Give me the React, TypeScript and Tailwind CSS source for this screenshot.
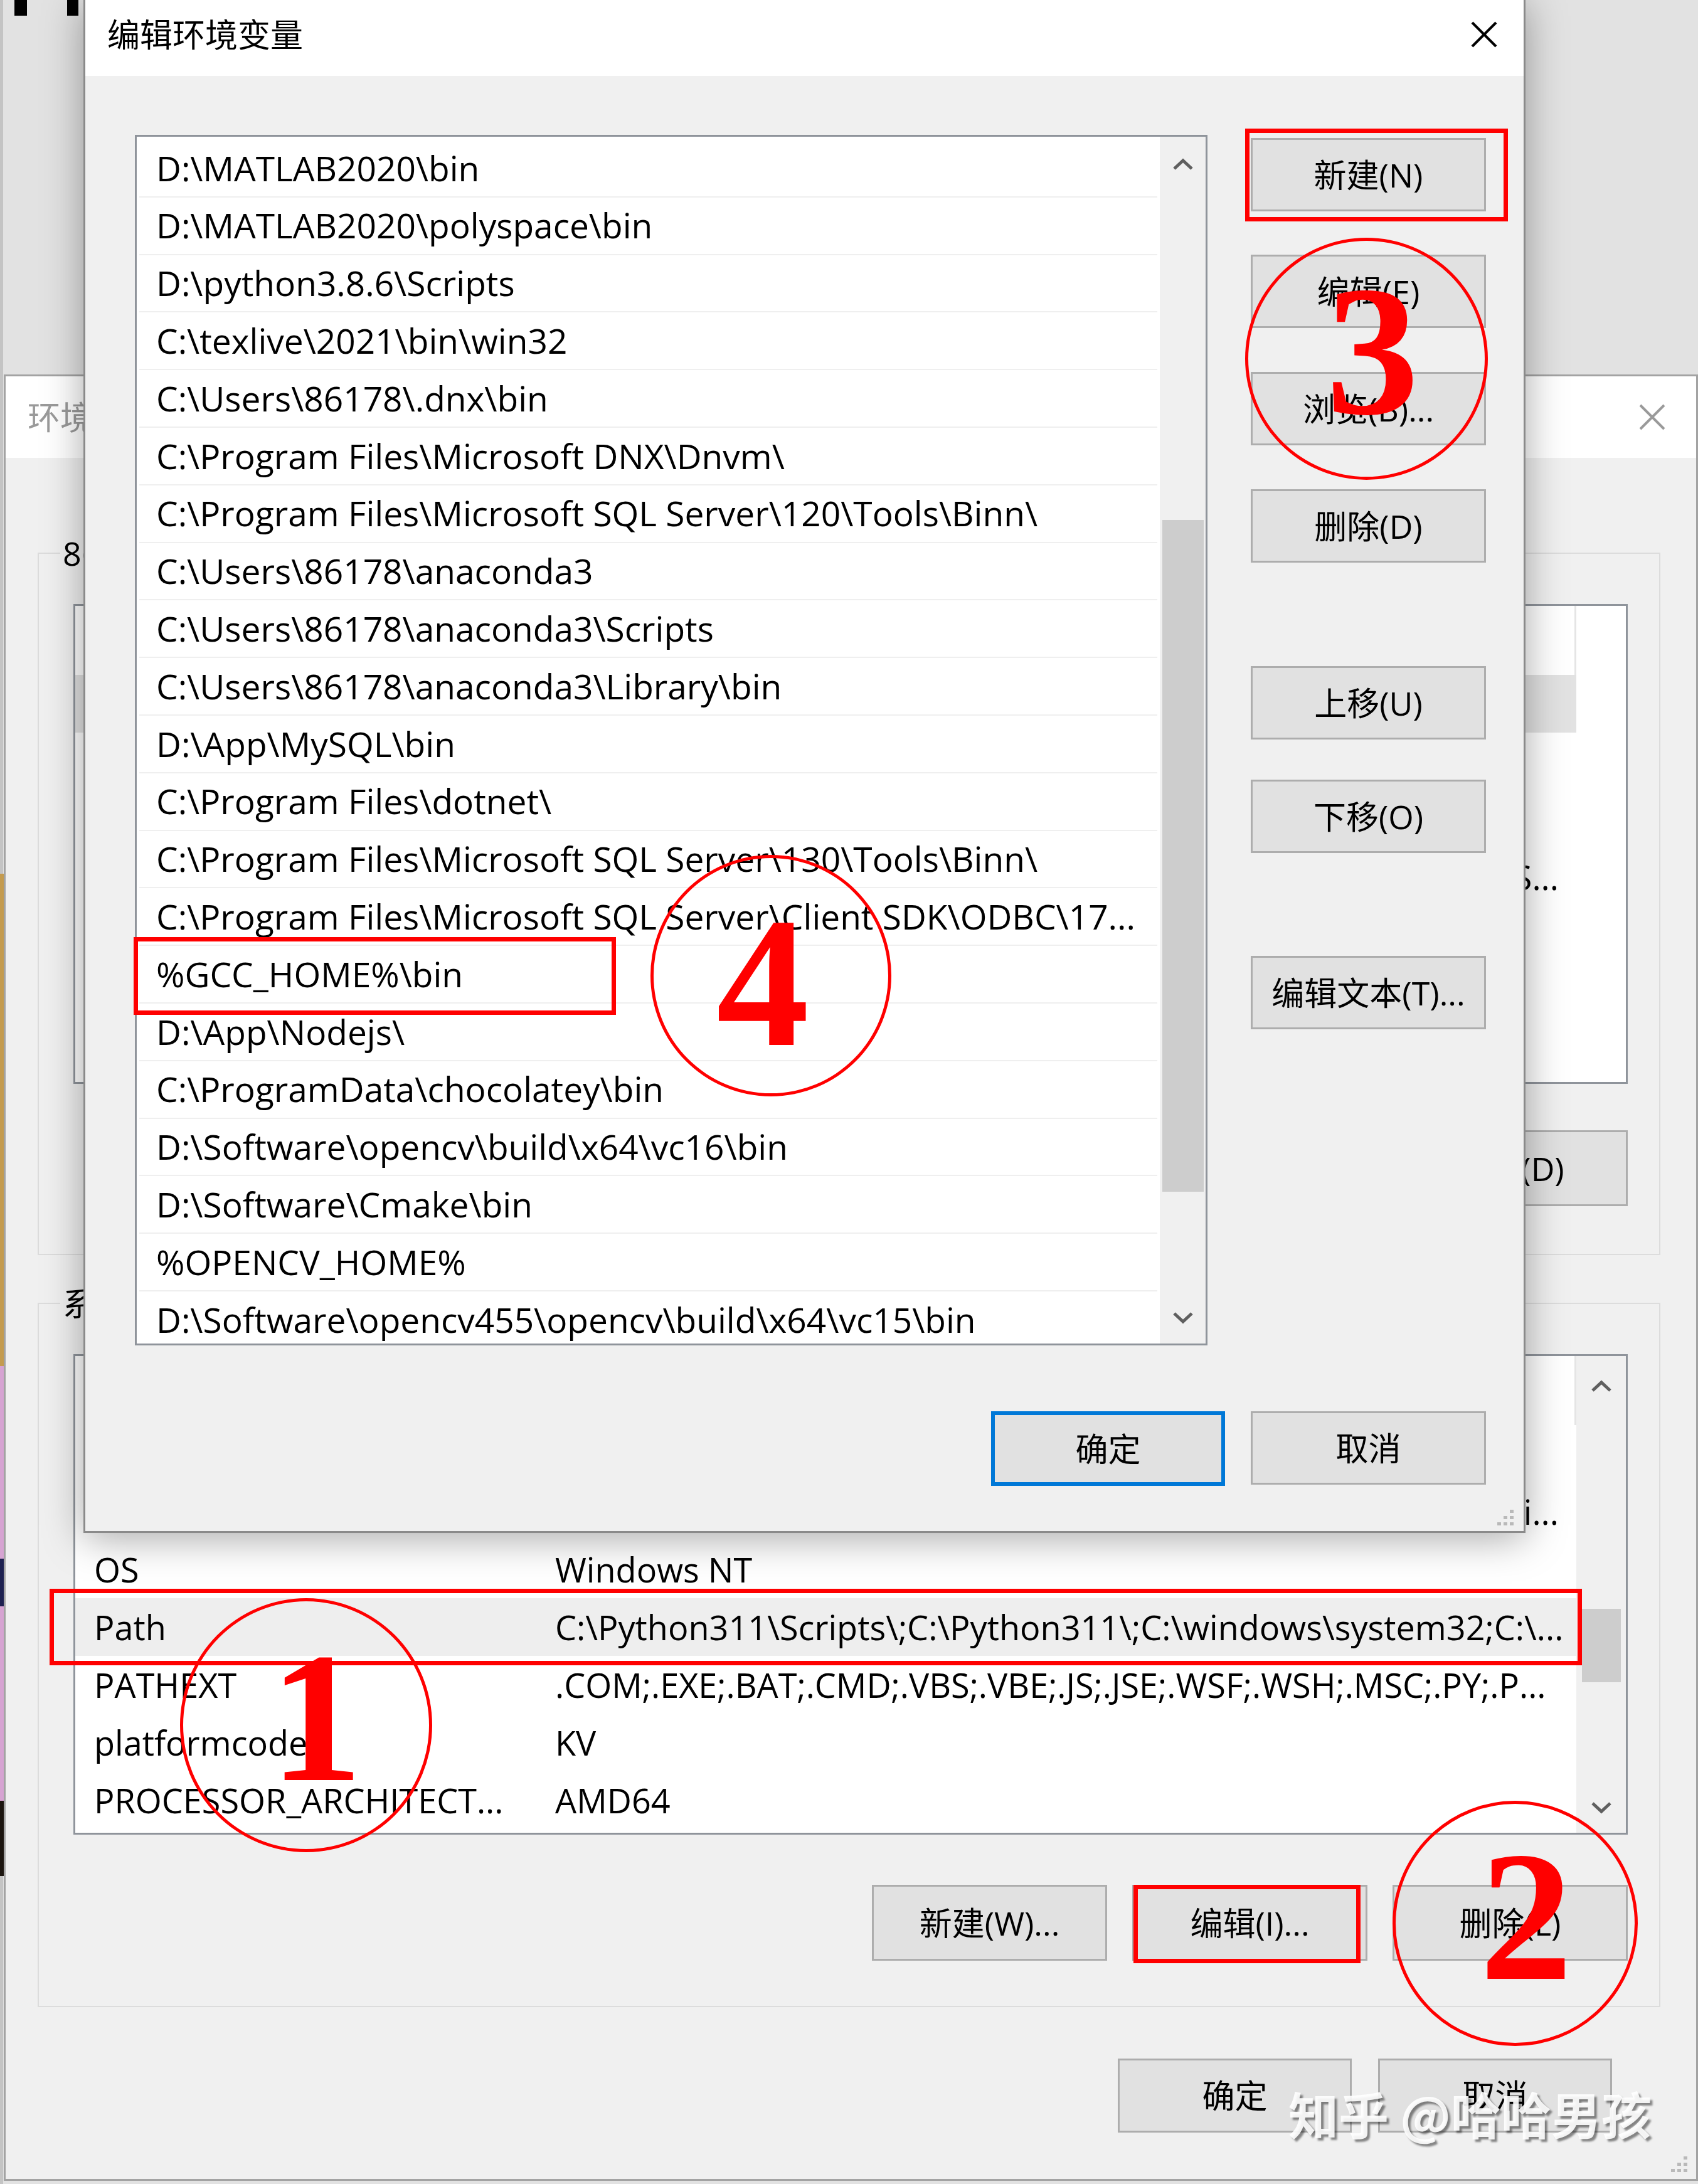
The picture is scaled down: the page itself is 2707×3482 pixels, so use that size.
import clsx from "clsx"
import { twMerge } from "tailwind-merge"

const dialogPaths = [
  "D:\\MATLAB2020\\bin",
  "D:\\MATLAB2020\\polyspace\\bin",
  "D:\\python3.8.6\\Scripts",
  "C:\\texlive\\2021\\bin\\win32",
  "C:\\Users\\86178\\.dnx\\bin",
  "C:\\Program Files\\Microsoft DNX\\Dnvm\\",
  "C:\\Program Files\\Microsoft SQL Server\\120\\Tools\\Binn\\",
  "C:\\Users\\86178\\anaconda3",
  "C:\\Users\\86178\\anaconda3\\Scripts",
  "C:\\Users\\86178\\anaconda3\\Library\\bin",
  "D:\\App\\MySQL\\bin",
  "C:\\Program Files\\dotnet\\",
  "C:\\Program Files\\Microsoft SQL Server\\130\\Tools\\Binn\\",
  "C:\\Program Files\\Microsoft SQL Server\\Client SDK\\ODBC\\17...",
  "%GCC_HOME%\\bin",
  "D:\\App\\Nodejs\\",
  "C:\\ProgramData\\chocolatey\\bin",
  "D:\\Software\\opencv\\build\\x64\\vc16\\bin",
  "D:\\Software\\Cmake\\bin",
  "%OPENCV_HOME%",
  "D:\\Software\\opencv455\\opencv\\build\\x64\\vc15\\bin",
]

type VarRow = { name: string; value: string; selected?: boolean; tail?: boolean }

const userVars: VarRow[] = [
  { name: "ChocolateyLastPathUpdate", value: "133257286417856342", selected: true },
  { name: "OneDrive", value: "C:\\Users\\86178\\OneDrive" },
  { name: "OneDriveConsumer", value: "C:\\Users\\86178\\OneDrive" },
  {
    name: "Path",
    value:
      "%USERPROFILE%\\AppData\\Local\\Microsoft\\WindowsApps;%PyCharm Community Edition%;D:\\App\\VS Code\\bin;%IntelliJ IDEA%;S...",
    tail: true,
  },
  { name: "PyCharm Community Edition", value: "C:\\Program Files\\JetBrains\\PyCharm\\bin;" },
  { name: "TEMP", value: "%USERPROFILE%\\AppData\\Local\\Temp" },
  { name: "TMP", value: "%USERPROFILE%\\AppData\\Local\\Temp" },
]

const systemVars: VarRow[] = [
  { name: "NUMBER_OF_PROCESSORS", value: "12" },
  {
    name: "NVTOOLSEXT_PATH",
    value: "C:\\Program Files\\NVIDIA Corporation\\NvToolsExt\\bin\\x64;C:\\Program Files (x86)\\Windows Kits\\10\\Wi...",
    tail: true,
  },
  { name: "OS", value: "Windows NT" },
  { name: "Path", value: "C:\\Python311\\Scripts\\;C:\\Python311\\;C:\\windows\\system32;C:\\...", selected: true },
  { name: "PATHEXT", value: ".COM;.EXE;.BAT;.CMD;.VBS;.VBE;.JS;.JSE;.WSF;.WSH;.MSC;.PY;.P..." },
  { name: "platformcode", value: "KV" },
  { name: "PROCESSOR_ARCHITECT...", value: "AMD64" },
]

function Chevron({ up }: { up?: boolean }) {
  return (
    <svg width="34" height="20" viewBox="0 0 34 20" fill="none">
      <polyline points={up ? "3,17 17,4 31,17" : "3,3 17,16 31,3"} stroke="#5f5f5f" strokeWidth="5" />
    </svg>
  )
}

function CloseX({ color = "#000" }: { color?: string }) {
  return (
    <svg width="44" height="44" viewBox="0 0 44 44" fill="none">
      <path d="M3 3L41 41M41 3L3 41" stroke={color} strokeWidth="4" />
    </svg>
  )
}

function Grip() {
  const dots = [
    [24, 24],
    [24, 14],
    [14, 24],
    [24, 4],
    [14, 14],
    [4, 24],
  ]
  return (
    <svg width="32" height="32" viewBox="0 0 32 32">
      {dots.map(([x, y]) => (
        <rect key={`${x}-${y}`} x={x} y={y} width="6" height="5" fill="#b9b9b9" />
      ))}
    </svg>
  )
}

function Btn({ label, className }: { label: string; className?: string }) {
  return (
    <div
      className={twMerge(
        "flex items-center justify-center bg-[#e1e1e1] border-[3px] border-[#adadad] text-[52px] leading-none text-black shrink-0",
        className
      )}
    >
      {label}
    </div>
  )
}

function VarList({ rows, scroll, selBg }: { rows: VarRow[]; scroll?: boolean; selBg: string }) {
  return (
    <div className="flex w-full h-full border-[3px] border-[#8f949b] bg-white overflow-hidden">
      <div className="w-[2393px] shrink-0 flex flex-col">
        <div className="flex items-center h-[110px] shrink-0 pl-[30px] border-r-[3px] border-[#e5e5e5] text-[52px]">
          <span className="w-[735px]">变量</span>
          <span>值</span>
        </div>
        {rows.map((r) => (
          <div
            key={r.name}
            className={clsx(
              "flex items-center h-[92px] shrink-0 pl-[30px] text-[54px] whitespace-nowrap",
              r.selected && selBg
            )}
          >
            <span className="w-[735px] shrink-0 overflow-hidden">{r.name}</span>
            {r.tail ? (
              <span className="flex justify-end w-[1600px] overflow-hidden">
                <span className="shrink-0">{r.value}</span>
              </span>
            ) : (
              <span>{r.value}</span>
            )}
          </div>
        ))}
      </div>
      {scroll && (
        <div className="flex-1 bg-[#f0f0f0] flex flex-col items-center">
          <div className="h-[96px] flex items-center">
            <Chevron up />
          </div>
          <div className="mt-[307px] w-[62px] h-[117px] bg-[#cdcdcd]" />
          <div className="flex-1" />
          <div className="h-[80px] flex items-center">
            <Chevron />
          </div>
        </div>
      )}
    </div>
  )
}

function GroupBox({
  label,
  rows,
  scroll,
  selBg,
  buttons,
  listH,
  btnGap,
  tail,
}: {
  label: string
  rows: VarRow[]
  scroll?: boolean
  selBg: string
  buttons: string[]
  listH: string
  btnGap: string
  tail: string
}) {
  return (
    <div className={clsx("relative border-2 border-[#dcdcdc] pt-[80px] pl-[55px] pr-[50px]", tail)}>
      <span className="absolute -top-[31px] left-[34px] px-[4px] bg-[#f0f0f0] text-[52px] leading-[60px]">{label}</span>
      <div className={listH}>
        <VarList rows={rows} scroll={scroll} selBg={selBg} />
      </div>
      <div className={clsx("flex justify-end", btnGap)}>
        {buttons.map((b) => (
          <Btn key={b} label={b} className="w-[375px] h-[121px]" />
        ))}
      </div>
    </div>
  )
}

function EnvWindow() {
  return (
    <div className="absolute left-[6px] top-[597px] w-[2701px] h-[2880px] border-[3px] border-[#a3a3a3] bg-[#f0f0f0] flex flex-col">
      <div className="h-[130px] shrink-0 bg-white flex items-center justify-between pl-[35px] pr-[48px]">
        <span className="text-[52px] text-[#9a9a9a]">环境变量</span>
        <CloseX color="#9a9a9a" />
      </div>
      <div className="flex flex-col pl-[51px] pr-[57px] pt-[151px]">
        <GroupBox
          label="86178 的用户变量(U)"
          rows={userVars}
          selBg="bg-[#e2e2e2]"
          buttons={["新建(N)...", "编辑(E)...", "删除(D)"]}
          listH="h-[765px]"
          btnGap="gap-[42px] mt-[74px]"
          tail="pb-[76px]"
        />
        <div className="mt-[76px]">
          <GroupBox
            label="系统变量(S)"
            rows={systemVars}
            scroll
            selBg="bg-[#eeeeee]"
            buttons={["新建(W)...", "编辑(I)...", "删除(L)"]}
            listH="h-[766px]"
            btnGap="gap-[40px] mt-[80px]"
            tail="pb-[72px]"
          />
        </div>
        <div className="flex justify-end gap-[42px] mt-[82px] pr-[77px]">
          <Btn label="确定" className="w-[373px] h-[118px]" />
          <Btn label="取消" className="w-[373px] h-[118px]" />
        </div>
      </div>
      <div className="absolute right-[12px] bottom-[8px]">
        <Grip />
      </div>
    </div>
  )
}

function EditDialog() {
  return (
    <div className="absolute left-[133px] top-[-3px] w-[2299px] h-[2447px] border-[3px] border-[#8a8a8a] bg-[#f0f0f0] shadow-[0_8px_60px_rgba(0,0,0,0.35)] flex flex-col">
      <div className="h-[121px] shrink-0 bg-white flex items-center justify-between pl-[35px] pr-[41px] pb-[12px]">
        <span className="text-[52px] text-black">编辑环境变量</span>
        <CloseX />
      </div>
      <div className="flex flex-col pl-[79px] pr-[60px] pt-[94px]">
        <div className="flex items-start gap-[69px]">
          <div className="w-[1710px] h-[1930px] shrink-0 border-[3px] border-[#8f949b] bg-white flex overflow-hidden">
            <div className="flex-1 flex flex-col pt-[5px] px-[4px]">
              {dialogPaths.map((p) => (
                <div
                  key={p}
                  className="h-[91.8px] shrink-0 flex items-center pl-[27px] border-b-2 border-[#efefef] text-[55px] text-black whitespace-nowrap"
                >
                  {p}
                </div>
              ))}
            </div>
            <div className="w-[73px] shrink-0 bg-[#f0f0f0] flex flex-col items-center">
              <div className="h-[88px] flex items-center">
                <Chevron up />
              </div>
              <div className="mt-[523px] w-[66px] h-[1071px] bg-[#cdcdcd]" />
              <div className="flex-1" />
              <div className="h-[82px] flex items-center">
                <Chevron />
              </div>
            </div>
          </div>
          <div className="flex flex-col mt-[5px]">
            <Btn label="新建(N)" className="w-[375px] h-[117px]" />
            <Btn label="编辑(E)" className="w-[375px] h-[117px] mt-[69px]" />
            <Btn label="浏览(B)..." className="w-[375px] h-[117px] mt-[70px]" />
            <Btn label="删除(D)" className="w-[375px] h-[117px] mt-[70px]" />
            <Btn label="上移(U)" className="w-[375px] h-[117px] mt-[165px]" />
            <Btn label="下移(O)" className="w-[375px] h-[117px] mt-[64px]" />
            <Btn label="编辑文本(T)..." className="w-[375px] h-[117px] mt-[164px]" />
          </div>
        </div>
        <div className="flex justify-end gap-[41px] mt-[105px]">
          <Btn label="确定" className="w-[373px] h-[119px] border-[6px] border-[#0078d7]" />
          <Btn label="取消" className="w-[375px] h-[117px]" />
        </div>
      </div>
      <div className="absolute right-[14px] bottom-[6px]">
        <Grip />
      </div>
    </div>
  )
}

function Annotations() {
  const digit =
    "absolute w-[160px] text-center text-[296px] leading-none font-bold text-[#ff0000] font-['Liberation_Serif',serif]"
  return (
    <>
      <div className="absolute left-[1985px] top-[205px] w-[419px] h-[148px] border-[7px] border-[#ff0000]" />
      <div className="absolute left-[213px] top-[1494px] w-[769px] h-[124px] border-[7px] border-[#ff0000]" />
      <div className="absolute left-[79px] top-[2533px] w-[2443px] h-[122px] border-[7px] border-[#ff0000]" />
      <div className="absolute left-[1807px] top-[3005px] w-[362px] h-[125px] border-[7px] border-[#ff0000]" />

      <div className="absolute left-[1985px] top-[379px] w-[387px] h-[386px] rounded-[50%] border-[5px] border-[#ff0000]" />
      <div className="absolute left-[1037px] top-[1363px] w-[384px] h-[385px] rounded-[50%] border-[5px] border-[#ff0000]" />
      <div className="absolute left-[287px] top-[2548px] w-[402px] h-[405px] rounded-[50%] border-[5px] border-[#ff0000]" />
      <div className="absolute left-[2220px] top-[2871px] w-[391px] h-[391px] rounded-[50%] border-[5px] border-[#ff0000]" />

      <span className={clsx(digit, "left-[2108px] top-[411px]")}>3</span>
      <span className={clsx(digit, "left-[1136px] top-[1418px]")}>4</span>
      <span className={clsx(digit, "left-[424px] top-[2590px]")}>1</span>
      <span className={clsx(digit, "left-[2353px] top-[2907px]")}>2</span>
    </>
  )
}

export default function App() {
  return (
    <div className="relative w-[2707px] h-[3482px] overflow-hidden bg-[#e2e2e2] font-['Open_Sans','Noto_Sans_CJK_SC',sans-serif] text-black">
      {/* desktop behind the windows */}
      <div className="absolute left-0 top-0 w-[5px] h-[3482px] bg-[#c4c4c4]" />
      <div className="absolute left-[23px] top-0 w-[20px] h-[25px] bg-black" />
      <div className="absolute left-[107px] top-0 w-[18px] h-[25px] bg-black" />
      <div className="absolute left-0 top-[1393px] w-[6px] flex flex-col">
        <div className="h-[785px] bg-[#c49b4f]" />
        <div className="h-[307px] bg-[#d6a3d2]" />
        <div className="h-[76px] bg-[#1d2050]" />
        <div className="h-[310px] bg-[#d6a3d2]" />
        <div className="h-[120px] bg-[#1c150f]" />
      </div>

      <EnvWindow />
      <EditDialog />
      <Annotations />

      <div className="absolute left-[2054px] top-[3328px] text-[80px] leading-none font-bold text-white/90 whitespace-nowrap font-['Noto_Sans_CJK_SC',sans-serif] [text-shadow:4px_4px_3px_rgba(0,0,0,0.45)]">
        知乎 @哈哈男孩
      </div>
    </div>
  )
}
